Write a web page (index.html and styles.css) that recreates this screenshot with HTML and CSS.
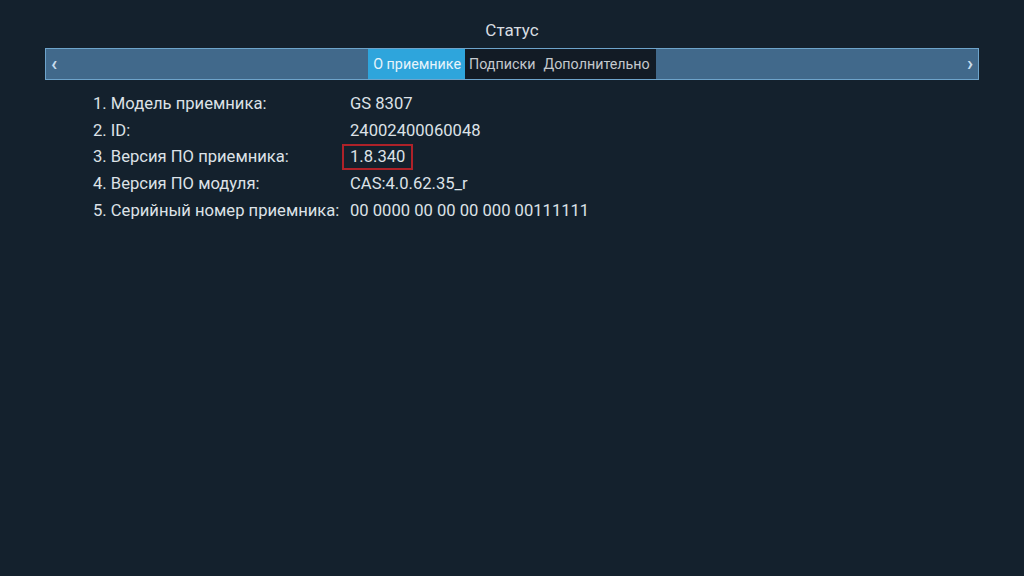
FILE: index.html
```html
<!DOCTYPE html>
<html lang="ru">
<head>
<meta charset="utf-8">
<link rel="stylesheet" href="styles.css">
</head>
<body>
<div class="screen">
  <div class="title">Статус</div>
  <div class="tabbar">
    <span class="arrow">&lsaquo;</span>
    <div class="tabs">
      <span class="tab active">О приемнике</span>
      <span class="tab">Подписки</span>
      <span class="tab">Дополнительно</span>
    </div>
    <span class="arrow">&rsaquo;</span>
  </div>
  <div class="info">
    <div class="label">1. Модель приемника:</div><div class="value">GS 8307</div>
    <div class="label">2. ID:</div><div class="value">24002400060048</div>
    <div class="label">3. Версия ПО приемника:</div><div class="value"><span class="boxed">1.8.340</span></div>
    <div class="label">4. Версия ПО модуля:</div><div class="value">CAS:4.0.62.35_r</div>
    <div class="label">5. Серийный номер приемника:</div><div class="value">00 0000 00 00 00 000 00111111</div>
  </div>
</div>
</body>
</html>
```
FILE: styles.css
```css
html, body {
  margin: 0;
  padding: 0;
  background: #14212d;
}
.screen {
  width: 1024px;
  height: 576px;
  background: #14212d;
  color: #e4e8ec;
  font-family: Roboto, "Noto Sans", sans-serif;
  overflow: hidden;
}
.title {
  text-align: center;
  font-size: 17px;
  color: #d8dde2;
  padding-top: 19px;
  line-height: 22px;
  box-sizing: border-box;
  height: 48px;
}
.tabbar {
  margin: 0 45px;
  height: 32px;
  box-sizing: border-box;
  border: 1px solid #6ea4cb;
  background: #41698b;
  display: flex;
  align-items: stretch;
}
.arrow {
  width: 16px;
  text-align: center;
  color: #c8dcec;
  font-size: 20px;
  line-height: 28px;
  font-weight: bold;
}
.tabs {
  flex: 1;
  display: flex;
  justify-content: center;
}
.tab {
  background: #121b25;
  color: #c4c9ce;
  font-size: 14.3px;
  line-height: 30px;
  padding: 0 4px;
}
.tab.active {
  background: #2ea5dc;
  color: #e8f4fb;
  padding: 0 4px 0 5px;
}
.tabs .tab:last-child {
  padding-right: 6px;
}
.info {
  display: grid;
  grid-template-columns: 257px auto;
  justify-content: start;
  padding: 11px 0 0 93px;
  font-size: 16.6px;
  line-height: 26.7px;
  color: #dde2e7;
}
.value {
  white-space: nowrap;
}
.boxed {
  display: inline-block;
  margin-left: -8px;
  padding: 0 6px;
  line-height: 22px;
  border: 2px solid #ae2229;
}
```
